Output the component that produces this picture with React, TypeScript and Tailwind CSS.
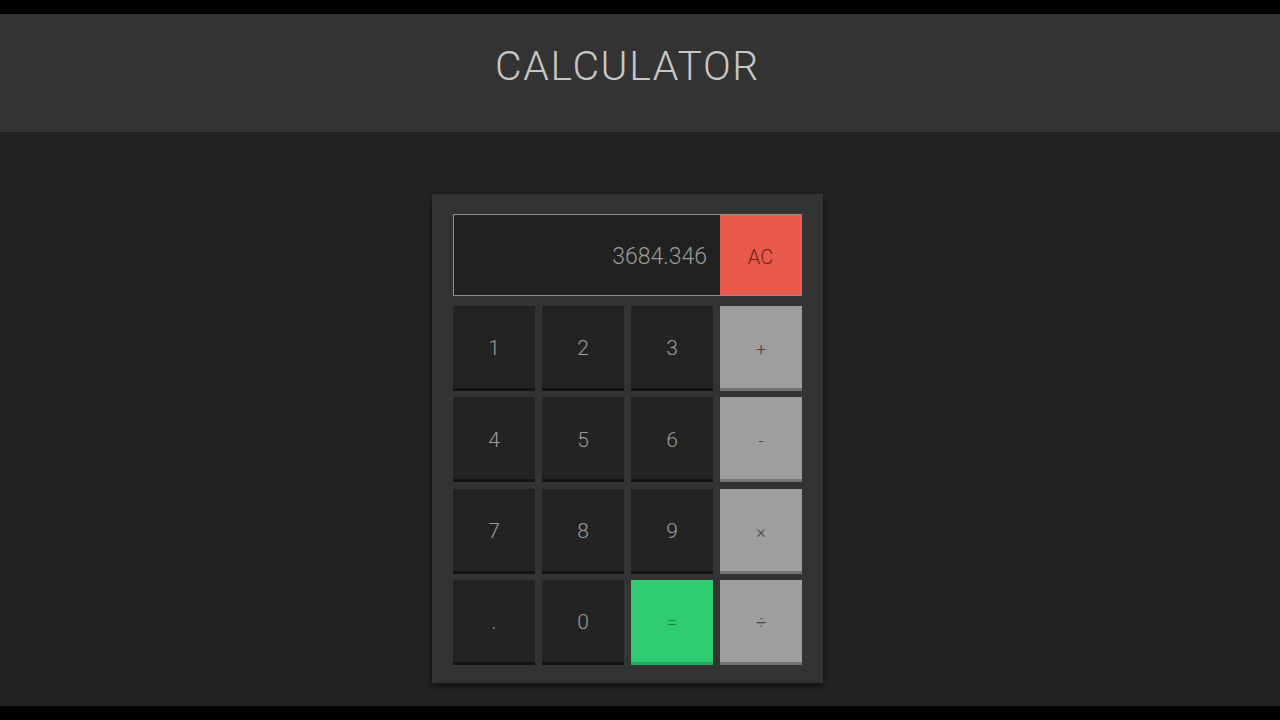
import React from 'react';

type Kind = 'num' | 'op' | 'eq';

const keys: { label: string; kind: Kind }[] = [
    { label: '1', kind: 'num' },
    { label: '2', kind: 'num' },
    { label: '3', kind: 'num' },
    { label: '+', kind: 'op' },
    { label: '4', kind: 'num' },
    { label: '5', kind: 'num' },
    { label: '6', kind: 'num' },
    { label: '-', kind: 'op' },
    { label: '7', kind: 'num' },
    { label: '8', kind: 'num' },
    { label: '9', kind: 'num' },
    { label: '×', kind: 'op' },
    { label: '.', kind: 'num' },
    { label: '0', kind: 'num' },
    { label: '=', kind: 'eq' },
    { label: '÷', kind: 'op' },
];

const kindClass: Record<Kind, string> = {
    num: 'bg-[#232323] border-[#131313] text-[#9c9c9c] text-[21px]',
    op: 'bg-[#9e9e9e] border-[#747474] text-[#444] text-[18px]',
    eq: 'bg-[#2ecc71] border-[#24a85b] text-[#1c7a43] text-[18px]',
};

export default function App() {
    return (
        <div className="h-screen flex flex-col bg-black font-['Roboto','Liberation_Sans',sans-serif] font-light">
            <div className="h-[14px] shrink-0" />
            <header className="h-[118px] shrink-0 bg-[#333333] flex items-center justify-center pr-[25px] pb-[14px]">
                <h1 className="text-[41px] leading-none tracking-[1.6px] text-[#c6c6c6] font-light">CALCULATOR</h1>
            </header>

            <main className="flex-1 bg-[#222222] flex justify-center pt-[62px] pr-[25px]">
                <div className="w-[391px] h-[489px] bg-[#333333] pt-[20px] px-[21px] shadow-[0_3px_6px_rgba(0,0,0,0.55)]">
                    {/* Display row */}
                    <div className="flex h-[82px] border border-[#8e8e8e]">
                        <div className="flex-1 bg-[#212121] flex items-center justify-end pr-[13px] pt-[4px] text-[23px] text-[#9a9a9a]">
                            3684.346
                        </div>
                        <button className="w-[81px] bg-[#e85a4a] pt-[4px] text-[20px] text-[#6e2016] font-light">AC</button>
                    </div>

                    {/* Keypad */}
                    <div className="grid grid-cols-4 gap-x-[7px] gap-y-[6.3px] mt-[10px]">
                        {keys.map(k => (
                            <button
                                key={k.label}
                                className={`h-[85px] border-b-[3px] pt-[4px] flex items-center justify-center ${kindClass[k.kind]}`}
                            >
                                {k.label}
                            </button>
                        ))}
                    </div>
                </div>
            </main>
            <div className="h-[14px] shrink-0" />
        </div>
    );
}
